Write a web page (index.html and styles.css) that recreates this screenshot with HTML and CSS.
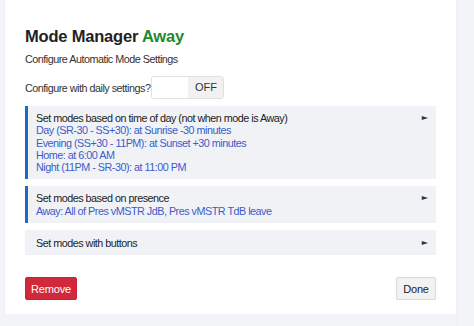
FILE: index.html
```html
<!DOCTYPE html>
<html lang="en">
<head>
    <meta charset="UTF-8">
    <link rel="stylesheet" href="styles.css">
    <title>Mode Manager</title>
</head>
<body>
    <div class="page">
        <div class="card">
            <h1>Mode Manager <span class="mode">Away</span></h1>
            <p class="subtitle">Configure Automatic Mode Settings</p>
            <div class="daily">
                <span>Configure with daily settings?</span>
                <div class="toggle">
                    <span class="toggle-blank"></span>
                    <span class="toggle-off">OFF</span>
                </div>
            </div>
            <div class="section active">
                <div class="section-body">
                    <div class="section-title">Set modes based on time of day (not when mode is Away)</div>
                    <div class="detail">Day (SR-30 - SS+30): at Sunrise -30 minutes</div>
                    <div class="detail">Evening (SS+30 - 11PM): at Sunset +30 minutes</div>
                    <div class="detail">Home: at 6:00 AM</div>
                    <div class="detail">Night (11PM - SR-30): at 11:00 PM</div>
                </div>
                <span class="arrow">&#9658;</span>
            </div>
            <div class="section active">
                <div class="section-body">
                    <div class="section-title">Set modes based on presence</div>
                    <div class="detail">Away: All of Pres vMSTR JdB, Pres vMSTR TdB leave</div>
                </div>
                <span class="arrow">&#9658;</span>
            </div>
            <div class="section plain">
                <div class="section-body">
                    <div class="section-title">Set modes with buttons</div>
                </div>
                <span class="arrow">&#9658;</span>
            </div>
            <div class="actions">
                <button type="button" class="btn-remove">Remove</button>
                <button type="button" class="btn-done">Done</button>
            </div>
        </div>
        <div class="side"></div>
    </div>
</body>
</html>
```

FILE: styles.css
```css
* {
    margin: 0;
    padding: 0;
    box-sizing: border-box;
}
body {
    background: #f3f4f8;
    font-family: "Liberation Sans", Arial, sans-serif;
    font-size: 10.8px;
    letter-spacing: -0.5px;
    color: #333333;
    width: 474px;
    height: 326px;
    overflow: hidden;
}
.page {
    display: flex;
    padding-left: 4px;
}
.card {
    background: #ffffff;
    width: 452px;
    height: 314px;
    border-left: 1px solid #eceef2;
    padding: 26px 20px 0 20px;
}
.side {
    width: 18px;
    height: 326px;
    border-left: 2px solid #eef0f5;
}
h1 {
    font-size: 16.5px;
    font-weight: bold;
    color: #222222;
    line-height: 20px;
    letter-spacing: -0.2px;
}
.mode {
    color: #1e8a2c;
}
.subtitle {
    margin-top: 6px;
    line-height: 14px;
}
.daily {
    display: flex;
    align-items: center;
    margin-top: 10px;
    gap: 1px;
}
.toggle {
    display: flex;
    height: 23px;
    border: 1px solid #e0e0e0;
    border-radius: 3px;
    overflow: hidden;
}
.toggle-blank {
    width: 36px;
    background: #ffffff;
}
.toggle-off {
    width: 35px;
    background: #f1f1f1;
    font-size: 11px;
    letter-spacing: 0;
    line-height: 21px;
    text-align: center;
}
.section {
    display: flex;
    justify-content: space-between;
    background: #f1f2f6;
    margin-top: 7px;
    padding: 6px 8px 6px 11px;
    line-height: 12.3px;
}
.section.active {
    border-left: 3px solid #1b6ac9;
    padding-left: 8px;
}
.section.plain {
    padding-top: 7px;
    padding-bottom: 6px;
}
.section-title {
    color: #222222;
}
.detail {
    color: #3b5cc9;
}
.arrow {
    font-family: "DejaVu Sans", sans-serif;
    font-size: 8px;
    letter-spacing: 0;
    color: #333333;
    line-height: 12px;
}
.actions {
    display: flex;
    justify-content: space-between;
    margin-top: 22px;
}
button {
    font-family: "Liberation Sans", Arial, sans-serif;
    font-size: 11px;
    letter-spacing: -0.2px;
    height: 23px;
    border-radius: 2px;
}
.btn-remove {
    background: #d1293b;
    color: #ffffff;
    border: 1px solid #c72536;
    width: 52px;
}
.btn-done {
    background: #f2f2f2;
    color: #222222;
    border: 1px solid #d9d9d9;
    width: 40px;
}
```
